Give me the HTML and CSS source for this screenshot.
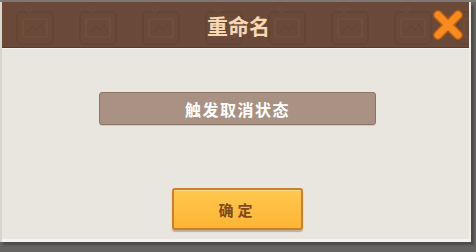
FILE: index.html
```html
<!DOCTYPE html>
<html>
<head>
<meta charset="utf-8">
<link rel="stylesheet" href="styles.css">
</head>
<body>
<div class="screen">
  <div class="dialog">
    <div class="header">
      <svg class="pattern" width="467" height="45" viewBox="0 0 467 45">
        <defs>
          <pattern id="p" x="13" y="0" width="63" height="45" patternUnits="userSpaceOnUse">
            <rect x="2" y="10" width="36" height="32" rx="4" fill="none" stroke="#624334" stroke-width="1.5"/>
            <rect x="8" y="17" width="24" height="18" rx="2" fill="none" stroke="#725141" stroke-width="1.2"/>
            <path d="M12 31 L18 24 L22 28 L26 22 L30 31" fill="none" stroke="#634435" stroke-width="1.2"/>
            <circle cx="14" cy="7" r="3" fill="none" stroke="#6f4e3e" stroke-width="1"/>
          </pattern>
        </defs>
        <rect width="467" height="45" fill="url(#p)"/>
      </svg>
      <span class="title">重命名</span>
      <svg class="close" width="30" height="30" viewBox="0 0 30 30">
        <path d="M5 5 L25 25 M25 5 L5 25" stroke="#b55a12" stroke-width="10" stroke-linecap="round"/>
        <path d="M5 5 L25 25 M25 5 L5 25" stroke="#f88b1e" stroke-width="7" stroke-linecap="round"/>
      </svg>
    </div>
    <div class="body">
      <div class="state-bar">触发取消状态</div>
      <div class="confirm">确定</div>
    </div>
  </div>
</div>
</body>
</html>
```
FILE: styles.css
```css
html, body {
  margin: 0;
  padding: 0;
}
body {
  width: 476px;
  height: 252px;
  overflow: hidden;
  background: #666563;
  font-family: "Noto Sans CJK SC", "Noto Sans", sans-serif;
}
.screen {
  padding-top: 2px;
  background: linear-gradient(#7d7873 0, #7d7873 2px, #656462 2px);
  height: 250px;
}
.dialog {
  width: 467px;
  border-left: 2px solid #d9d5cd;
  border-right: 2px solid #efede8;
  box-shadow: 3px 3px 2px rgba(0,0,0,0.25);
}
.header {
  position: relative;
  overflow: hidden;
  height: 45px;
  background: #6b4939;
  display: flex;
  align-items: center;
  justify-content: center;
  padding-left: 6px;
  border-bottom: 1px solid #5a3b2d;
}
.pattern {
  position: absolute;
  left: 0;
  top: 0;
}
.title {
  position: relative;
  color: #f8d7b3;
  font-size: 21px;
  font-weight: 700;
  letter-spacing: 0;
}
.close {
  position: absolute;
  right: 6px;
  top: 8px;
}
.body {
  background: #e9e6df;
  height: 190px;
  border-top: 1px solid #f3f1ec;
  border-bottom: 3px solid #f5f3ef;
  display: flex;
  flex-direction: column;
  align-items: center;
  padding-left: 4px;
}
.state-bar {
  margin-top: 43px;
  width: 275px;
  height: 31px;
  background: #a99283;
  border: 1px solid #8c7566;
  border-radius: 3px;
  box-shadow: 0 1px 0 #cfc8bf;
  color: #ffffff;
  font-size: 16px;
  font-weight: 700;
  letter-spacing: 1.5px;
  display: flex;
  align-items: center;
  justify-content: center;
}
.confirm {
  margin-top: 63px;
  width: 127px;
  height: 38px;
  background: linear-gradient(#ffc84e, #fdb534);
  border: 2px solid #c97f2c;
  border-radius: 3px;
  box-shadow: inset 0 1px 0 #ffe08a, 0 2px 1px rgba(120,70,20,0.35);
  color: #7e4a1c;
  font-size: 15px;
  font-weight: 700;
  letter-spacing: 4px;
  display: flex;
  align-items: center;
  justify-content: center;
}
```
